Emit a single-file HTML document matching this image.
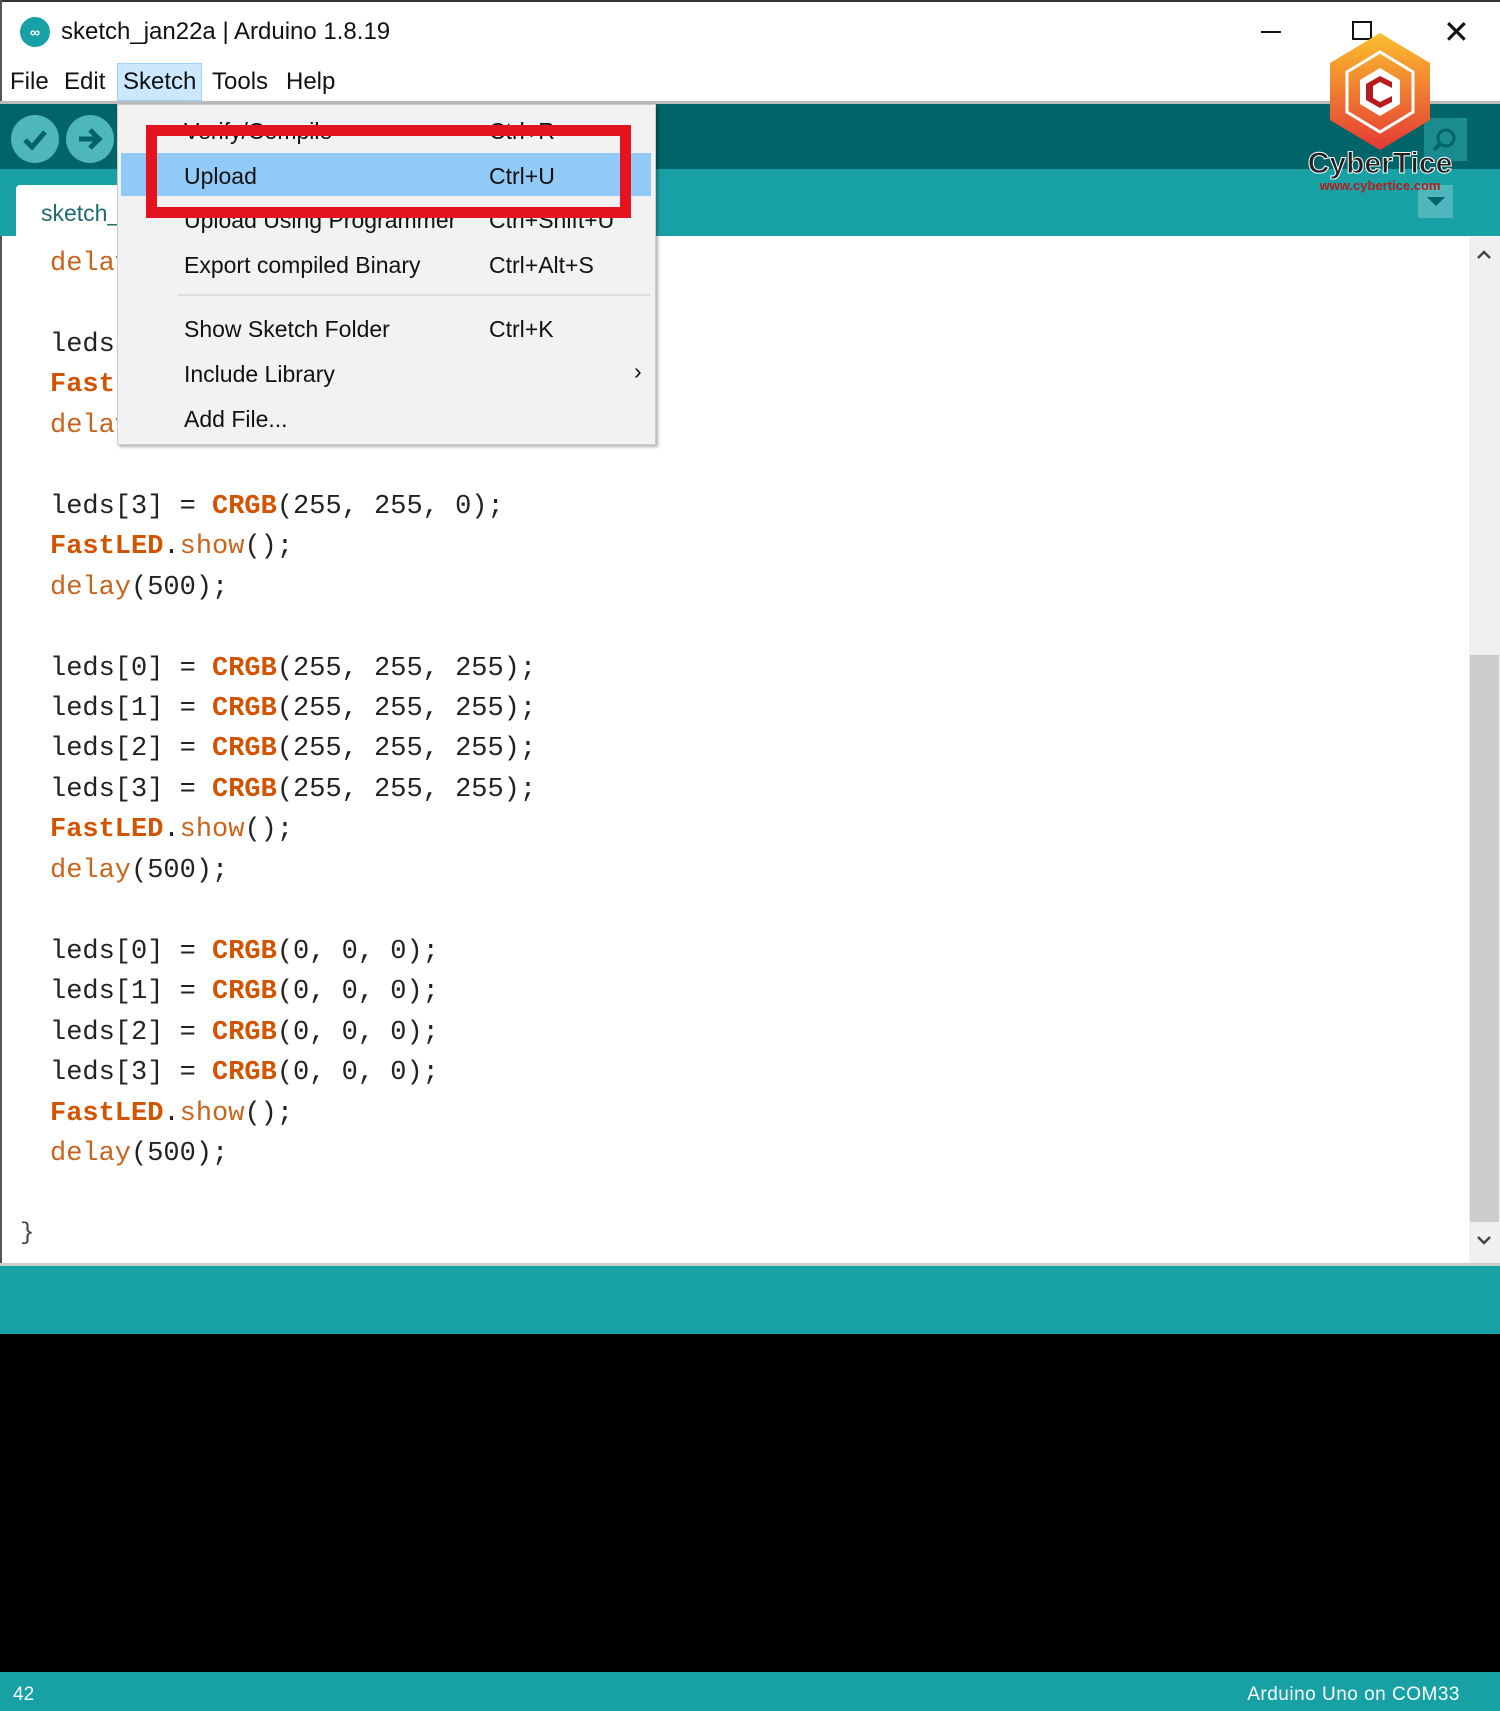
<!DOCTYPE html>
<html><head><meta charset="utf-8"><style>
*{margin:0;padding:0;box-sizing:border-box}
body{width:1500px;height:1711px;position:relative;overflow:hidden;background:#fff;font-family:"Liberation Sans",sans-serif}
.a{position:absolute}
.ui{font-family:"Liberation Sans",sans-serif;font-size:23px;color:#111;white-space:nowrap}
.code{position:absolute;left:50px;top:244px;font-family:"Liberation Mono",monospace;font-size:27px;line-height:40.45px;color:#222;white-space:pre}
.k{color:#d35400;font-weight:bold}
.f{color:#c8641e}
</style></head><body>
<div class="a" style="left:0;top:0;width:1500px;height:2px;background:#333"></div>
<div class="a" style="left:0;top:0;width:2px;height:1711px;background:#555"></div>
<div class="a" style="left:20px;top:17px;width:30px;height:30px;border-radius:50%;background:#17a1a5"></div>
<div class="a" style="left:23px;top:20px;width:24px;height:24px;color:#fff;font-size:14px;font-weight:bold;text-align:center;line-height:24px">∞</div>
<div class="a ui" style="left:61px;top:18px;font-size:24px">sketch_jan22a | Arduino 1.8.19</div>
<div class="a" style="left:1261px;top:31px;width:20px;height:2px;background:#111"></div>
<div class="a" style="left:1352px;top:21px;width:20px;height:19px;border:2px solid #111"></div>
<div class="a ui" style="left:1443px;top:13px;font-size:32px">✕</div>
<div class="a" style="left:117px;top:63px;width:85px;height:38px;background:#cce8ff;border:1px solid #99d1ff"></div>
<div class="a ui" style="left:10px;top:68px;font-size:24px">File</div>
<div class="a ui" style="left:64px;top:68px;font-size:24px">Edit</div>
<div class="a ui" style="left:123px;top:68px;font-size:24px">Sketch</div>
<div class="a ui" style="left:212px;top:68px;font-size:24px">Tools</div>
<div class="a ui" style="left:286px;top:68px;font-size:24px">Help</div>
<div class="a" style="left:0;top:101px;width:1500px;height:3px;background:#bbb"></div>
<div class="a" style="left:0;top:104px;width:1500px;height:65px;background:#006468"></div>
<div class="a" style="left:11px;top:115px;width:48px;height:48px;border-radius:50%;background:#4db7bb"></div>
<div class="a" style="left:66px;top:115px;width:48px;height:48px;border-radius:50%;background:#4db7bb"></div>
<svg class="a" style="left:11px;top:115px" width="48" height="48"><path d="M14 25 L21 32 L34 17" stroke="#006468" stroke-width="5" fill="none"/></svg>
<svg class="a" style="left:66px;top:115px" width="48" height="48"><path d="M13 24 H32 M24 15 L33 24 L24 33" stroke="#006468" stroke-width="5" fill="none"/></svg>
<div class="a" style="left:1424px;top:118px;width:43px;height:43px;background:#1a8c90"></div>
<svg class="a" style="left:1424px;top:118px" width="43" height="43"><circle cx="22" cy="20" r="8" stroke="#006468" stroke-width="3" fill="none"/><path d="M16 26 L10 32" stroke="#006468" stroke-width="4"/></svg>
<div class="a" style="left:0;top:169px;width:1500px;height:67px;background:#17a1a5"></div>
<div class="a" style="left:16px;top:185px;width:110px;height:52px;background:#fff;border-radius:4px 4px 0 0"></div>
<div class="a ui" style="left:41px;top:200px;color:#1e6b6f">sketch_</div>
<div class="a" style="left:1418px;top:185px;width:35px;height:33px;background:#4db7bb"></div>
<div class="a" style="left:1427px;top:197px;width:0;height:0;border-left:9px solid transparent;border-right:9px solid transparent;border-top:9px solid #006468"></div>
<div class="code"><span class="f">delay</span>(500);

leds[2] = <span class="k">CRGB</span>(255, 0, 255);
<span class="k">FastLED</span>.<span class="f">show</span>();
<span class="f">delay</span>(500);

leds[3] = <span class="k">CRGB</span>(255, 255, 0);
<span class="k">FastLED</span>.<span class="f">show</span>();
<span class="f">delay</span>(500);

leds[0] = <span class="k">CRGB</span>(255, 255, 255);
leds[1] = <span class="k">CRGB</span>(255, 255, 255);
leds[2] = <span class="k">CRGB</span>(255, 255, 255);
leds[3] = <span class="k">CRGB</span>(255, 255, 255);
<span class="k">FastLED</span>.<span class="f">show</span>();
<span class="f">delay</span>(500);

leds[0] = <span class="k">CRGB</span>(0, 0, 0);
leds[1] = <span class="k">CRGB</span>(0, 0, 0);
leds[2] = <span class="k">CRGB</span>(0, 0, 0);
leds[3] = <span class="k">CRGB</span>(0, 0, 0);
<span class="k">FastLED</span>.<span class="f">show</span>();
<span class="f">delay</span>(500);

</div>
<div class="a" style="left:20px;top:1220px;font-family:'Liberation Mono',monospace;font-size:24px;color:#444">}</div>
<div class="a" style="left:1469px;top:237px;width:31px;height:1027px;background:#f0f0f0"></div>
<div class="a" style="left:1470px;top:655px;width:29px;height:567px;background:#cdcdcd"></div>
<svg class="a" style="left:1474px;top:245px" width="20" height="20"><path d="M4 13 L10 7 L16 13" stroke="#444" stroke-width="2.5" fill="none"/></svg>
<svg class="a" style="left:1474px;top:1230px" width="20" height="20"><path d="M4 7 L10 13 L16 7" stroke="#444" stroke-width="2.5" fill="none"/></svg>
<div class="a" style="left:0;top:1263px;width:1500px;height:3px;background:#ccc"></div>
<div class="a" style="left:0;top:1266px;width:1500px;height:68px;background:#17a1a5"></div>
<div class="a" style="left:0;top:1334px;width:1500px;height:338px;background:#000"></div>
<div class="a" style="left:0;top:1672px;width:1500px;height:39px;background:#17a1a5"></div>
<div class="a ui" style="left:13px;top:1684px;font-size:19px;color:#fff">42</div>
<div class="a ui" style="right:40px;top:1684px;font-size:19px;color:#fff;letter-spacing:0.5px">Arduino Uno on COM33</div>
<div class="a" style="left:117px;top:104px;width:539px;height:341px;background:#f2f2f2;border:1px solid #ccc;box-shadow:2px 2px 3px rgba(0,0,0,.3)"></div>
<div class="a" style="left:121px;top:153px;width:530px;height:43px;background:#91c9f7"></div>
<div class="a" style="left:178px;top:294px;width:472px;height:2px;background:#ddd"></div>
<div class="a ui" style="left:184px;top:118px">Verify/Compile</div><div class="a ui" style="left:489px;top:118px">Ctrl+R</div>
<div class="a ui" style="left:184px;top:163px">Upload</div><div class="a ui" style="left:489px;top:163px">Ctrl+U</div>
<div class="a ui" style="left:184px;top:207px">Upload Using Programmer</div><div class="a ui" style="left:489px;top:207px">Ctrl+Shift+U</div>
<div class="a ui" style="left:184px;top:252px">Export compiled Binary</div><div class="a ui" style="left:489px;top:252px">Ctrl+Alt+S</div>
<div class="a ui" style="left:184px;top:316px">Show Sketch Folder</div><div class="a ui" style="left:489px;top:316px">Ctrl+K</div>
<div class="a ui" style="left:184px;top:361px">Include Library</div><div class="a ui" style="left:634px;top:358px">›</div>
<div class="a ui" style="left:184px;top:406px">Add File...</div>
<div class="a" style="left:146px;top:125px;width:485px;height:93px;border:11px solid #e3141f"></div>
<svg class="a" style="left:1300px;top:30px" width="160" height="170">
<defs><linearGradient id="g" x1="0" y1="0" x2="0" y2="1"><stop offset="0" stop-color="#fbc02d"/><stop offset="1" stop-color="#e53935"/></linearGradient></defs>
<polygon points="80,3 130,33 130,90 80,120 30,90 30,33" fill="url(#g)"/>
<polygon points="80,22 113,42 113,82 80,102 47,82 47,42" fill="none" stroke="#fff" stroke-width="3"/>
<polygon points="80,38 100,50 100,74 80,86 60,74 60,50" fill="#fff"/>
<path d="M92 52 L80 46 L66 54 L66 70 L80 78 L92 72 L92 66 L80 72 L73 68 L73 56 L80 52 L92 58Z" fill="#b71c1c"/>
<text x="80" y="143" text-anchor="middle" font-family="Liberation Sans" font-weight="bold" font-size="30" fill="#222" stroke="#fff" stroke-width="1">CyberTice</text>
<text x="80" y="160" text-anchor="middle" font-family="Liberation Sans" font-weight="bold" font-size="13" fill="#b71c1c">www.cybertice.com</text>
</svg>
</body></html>
